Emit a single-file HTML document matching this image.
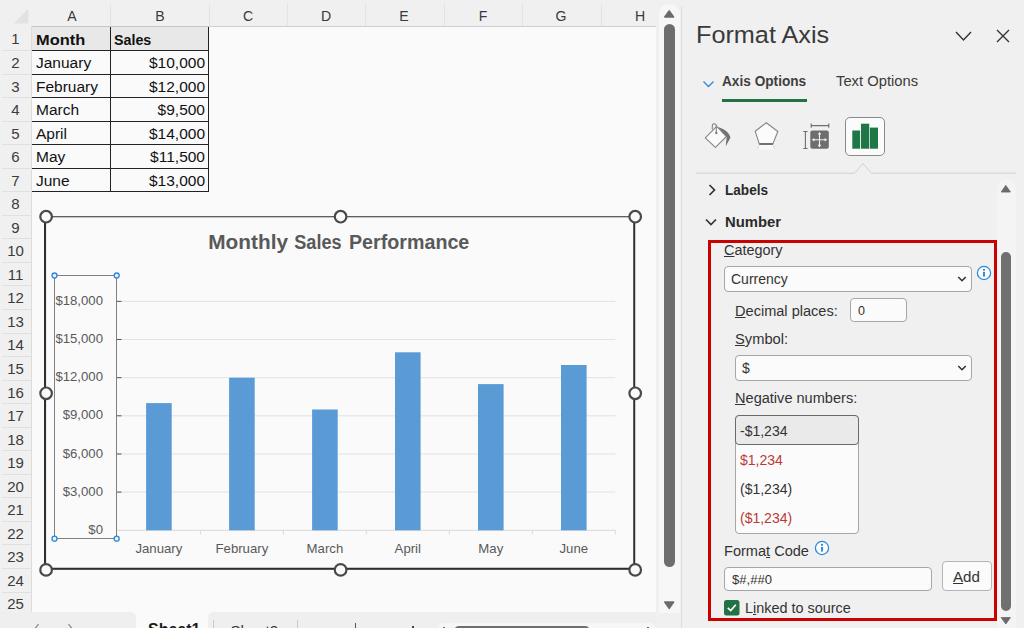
<!DOCTYPE html>
<html>
<head>
<meta charset="utf-8">
<title>Format Axis</title>
<style>
*{box-sizing:border-box;margin:0;padding:0}
html,body{width:1024px;height:628px;overflow:hidden;background:#f9f9f9}
body{font-family:"Liberation Sans",sans-serif;position:relative;color:#222}
.abs{position:absolute}
.t{position:absolute;white-space:nowrap;line-height:1;transform-origin:0 50%}
.c{transform-origin:50% 50%}
.r{transform-origin:100% 50%}
/* sheet */
#sheet{position:absolute;left:0;top:0;width:656px;height:613px;background:#fafafa;overflow:hidden}
#colhdr{position:absolute;left:0;top:0;width:656px;height:27px;background:#f0f0f0;border-bottom:1px solid #cfcfcf}
#rowhdr{position:absolute;left:0;top:26px;width:32px;height:587px;background:#f0f0f0;border-right:1px solid #dcdcdc}
.ch{position:absolute;top:6.4px;font-size:15px;color:#3b3b3b;width:40px;margin-left:-20px;text-align:center;line-height:20px;transform:scaleX(0.94)}
.csep{position:absolute;top:4px;width:1px;height:22px;background:#e3e3e3}
.rh{position:absolute;left:0;width:31px;text-align:center;font-size:15px;color:#3b3b3b;line-height:20px}
.rsep{position:absolute;left:2px;width:30px;height:1px;background:#e0e0e0}
.cell{position:absolute;font-size:15.5px;color:#111;line-height:22px;white-space:nowrap}
/* panel */
#panel{position:absolute;left:682px;top:0;width:342px;height:628px;background:#f0f0f0}
.box{position:absolute;background:#fbfbfb;border:1px solid #a6a6a6;border-radius:4px}
</style>
</head>
<body>
<div id="sheet">
  <div id="colhdr"></div>
  <div id="rowhdr"></div>
  <!--HDR-->
  <svg class="abs" style="left:12px;top:8px" width="18" height="18" viewBox="0 0 18 18"><path d="M16.3 0.8 V15.6 H1.5 Z" fill="#e2e2e2"/></svg>
  <div class="ch" style="left:72px">A</div>
  <div class="ch" style="left:160px">B</div>
  <div class="ch" style="left:248px">C</div>
  <div class="ch" style="left:326px">D</div>
  <div class="ch" style="left:404px">E</div>
  <div class="ch" style="left:483px">F</div>
  <div class="ch" style="left:561px">G</div>
  <div class="ch" style="left:640px">H</div>
  <div class="csep" style="left:110px"></div>
  <div class="csep" style="left:209px"></div>
  <div class="csep" style="left:287px"></div>
  <div class="csep" style="left:365px"></div>
  <div class="csep" style="left:444px"></div>
  <div class="csep" style="left:522px"></div>
  <div class="csep" style="left:601px"></div>
  <div class="rh" style="top:29.4px">1</div>
  <div class="rsep" style="top:50.0px"></div>
  <div class="rh" style="top:52.9px">2</div>
  <div class="rsep" style="top:73.6px"></div>
  <div class="rh" style="top:76.5px">3</div>
  <div class="rsep" style="top:97.1px"></div>
  <div class="rh" style="top:100.0px">4</div>
  <div class="rsep" style="top:120.7px"></div>
  <div class="rh" style="top:123.6px">5</div>
  <div class="rsep" style="top:144.2px"></div>
  <div class="rh" style="top:147.1px">6</div>
  <div class="rsep" style="top:167.7px"></div>
  <div class="rh" style="top:170.6px">7</div>
  <div class="rsep" style="top:191.3px"></div>
  <div class="rh" style="top:194.2px">8</div>
  <div class="rsep" style="top:214.8px"></div>
  <div class="rh" style="top:217.7px">9</div>
  <div class="rsep" style="top:238.4px"></div>
  <div class="rh" style="top:241.3px">10</div>
  <div class="rsep" style="top:261.9px"></div>
  <div class="rh" style="top:264.8px">11</div>
  <div class="rsep" style="top:285.4px"></div>
  <div class="rh" style="top:288.3px">12</div>
  <div class="rsep" style="top:309.0px"></div>
  <div class="rh" style="top:311.9px">13</div>
  <div class="rsep" style="top:332.5px"></div>
  <div class="rh" style="top:335.4px">14</div>
  <div class="rsep" style="top:356.1px"></div>
  <div class="rh" style="top:359.0px">15</div>
  <div class="rsep" style="top:379.6px"></div>
  <div class="rh" style="top:382.5px">16</div>
  <div class="rsep" style="top:403.1px"></div>
  <div class="rh" style="top:406.0px">17</div>
  <div class="rsep" style="top:426.7px"></div>
  <div class="rh" style="top:429.6px">18</div>
  <div class="rsep" style="top:450.2px"></div>
  <div class="rh" style="top:453.1px">19</div>
  <div class="rsep" style="top:473.8px"></div>
  <div class="rh" style="top:476.7px">20</div>
  <div class="rsep" style="top:497.3px"></div>
  <div class="rh" style="top:500.2px">21</div>
  <div class="rsep" style="top:520.8px"></div>
  <div class="rh" style="top:523.7px">22</div>
  <div class="rsep" style="top:544.4px"></div>
  <div class="rh" style="top:547.3px">23</div>
  <div class="rsep" style="top:567.9px"></div>
  <div class="rh" style="top:570.8px">24</div>
  <div class="rsep" style="top:591.5px"></div>
  <div class="rh" style="top:594.4px">25</div>
  <div class="rsep" style="top:615.0px"></div>
  <!--TABLE-->
  <div class="abs" style="left:32px;top:26px;width:177px;height:2px;background:#c6c6c6"></div>
  <div class="abs" style="left:32px;top:27px;width:177px;height:24px;background:#e8e8e8"></div>
  <div class="cell" style="left:35.5px;top:28.5px;font-weight:bold;transform:scaleX(1.06);transform-origin:0 50%">Month</div>
  <div class="cell" style="left:114px;top:28.5px;font-weight:bold;transform:scaleX(0.92);transform-origin:0 50%">Sales</div>
  <div class="cell" style="left:36px;top:52.0px;">January</div>
  <div class="cell" style="left:110px;width:95px;text-align:right;top:52.0px">$10,000</div>
  <div class="cell" style="left:36px;top:75.6px;">February</div>
  <div class="cell" style="left:110px;width:95px;text-align:right;top:75.6px">$12,000</div>
  <div class="cell" style="left:36px;top:99.1px;">March</div>
  <div class="cell" style="left:110px;width:95px;text-align:right;top:99.1px">$9,500</div>
  <div class="cell" style="left:36px;top:122.7px;">April</div>
  <div class="cell" style="left:110px;width:95px;text-align:right;top:122.7px">$14,000</div>
  <div class="cell" style="left:36px;top:146.2px;">May</div>
  <div class="cell" style="left:110px;width:95px;text-align:right;top:146.2px">$11,500</div>
  <div class="cell" style="left:36px;top:169.7px;">June</div>
  <div class="cell" style="left:110px;width:95px;text-align:right;top:169.7px">$13,000</div>
  <div class="abs" style="left:32px;top:50px;width:177px;height:1px;background:#222"></div>
  <div class="abs" style="left:32px;top:74px;width:177px;height:1px;background:#222"></div>
  <div class="abs" style="left:32px;top:97px;width:177px;height:1px;background:#222"></div>
  <div class="abs" style="left:32px;top:121px;width:177px;height:1px;background:#222"></div>
  <div class="abs" style="left:32px;top:144px;width:177px;height:1px;background:#222"></div>
  <div class="abs" style="left:32px;top:168px;width:177px;height:1px;background:#222"></div>
  <div class="abs" style="left:32px;top:191px;width:177px;height:1px;background:#222"></div>
  <div class="abs" style="left:110px;top:27px;width:1px;height:165px;background:#222"></div>
  <div class="abs" style="left:208px;top:27px;width:1px;height:165px;background:#222"></div>
  <!--CHART-->
  <svg class="abs" style="left:0;top:0" width="656" height="613" viewBox="0 0 656 613" font-family="Liberation Sans, sans-serif">
  <rect x="45.5" y="216.7" width="589" height="352" fill="#fafafa" stroke="#4f4f4f" stroke-width="1.2"/>
  <line x1="45" y1="216" x2="45" y2="569.8" stroke="#2e2e2e" stroke-width="2"/>
  <line x1="634.2" y1="216" x2="634.2" y2="569.8" stroke="#2e2e2e" stroke-width="1.9"/>
  <line x1="44" y1="568.8" x2="635.2" y2="568.8" stroke="#2e2e2e" stroke-width="2"/>
  <line x1="117.4" y1="492.1" x2="615.3" y2="492.1" stroke="#e2e2e2" stroke-width="1"/>
  <line x1="117" y1="492.1" x2="121.5" y2="492.1" stroke="#555" stroke-width="1"/>
  <line x1="117.4" y1="454.0" x2="615.3" y2="454.0" stroke="#e2e2e2" stroke-width="1"/>
  <line x1="117" y1="454.0" x2="121.5" y2="454.0" stroke="#555" stroke-width="1"/>
  <line x1="117.4" y1="415.8" x2="615.3" y2="415.8" stroke="#e2e2e2" stroke-width="1"/>
  <line x1="117" y1="415.8" x2="121.5" y2="415.8" stroke="#555" stroke-width="1"/>
  <line x1="117.4" y1="377.7" x2="615.3" y2="377.7" stroke="#e2e2e2" stroke-width="1"/>
  <line x1="117" y1="377.7" x2="121.5" y2="377.7" stroke="#555" stroke-width="1"/>
  <line x1="117.4" y1="339.5" x2="615.3" y2="339.5" stroke="#e2e2e2" stroke-width="1"/>
  <line x1="117" y1="339.5" x2="121.5" y2="339.5" stroke="#555" stroke-width="1"/>
  <line x1="117.4" y1="301.4" x2="615.3" y2="301.4" stroke="#e2e2e2" stroke-width="1"/>
  <line x1="117" y1="301.4" x2="121.5" y2="301.4" stroke="#555" stroke-width="1"/>
  <line x1="117.4" y1="530.3" x2="615.3" y2="530.3" stroke="#d9d9d9" stroke-width="1"/>
  <line x1="200.4" y1="530.3" x2="200.4" y2="534.5" stroke="#d9d9d9" stroke-width="1"/>
  <line x1="283.4" y1="530.3" x2="283.4" y2="534.5" stroke="#d9d9d9" stroke-width="1"/>
  <line x1="366.3" y1="530.3" x2="366.3" y2="534.5" stroke="#d9d9d9" stroke-width="1"/>
  <line x1="449.3" y1="530.3" x2="449.3" y2="534.5" stroke="#d9d9d9" stroke-width="1"/>
  <line x1="532.3" y1="530.3" x2="532.3" y2="534.5" stroke="#d9d9d9" stroke-width="1"/>
  <line x1="615.3" y1="530.3" x2="615.3" y2="534.5" stroke="#d9d9d9" stroke-width="1"/>
  <rect x="146.1" y="403.1" width="25.6" height="127.2" fill="#5b9bd5"/>
  <rect x="229.1" y="377.7" width="25.6" height="152.6" fill="#5b9bd5"/>
  <rect x="312.1" y="409.5" width="25.6" height="120.8" fill="#5b9bd5"/>
  <rect x="395.0" y="352.3" width="25.6" height="178.0" fill="#5b9bd5"/>
  <rect x="478.0" y="384.1" width="25.6" height="146.2" fill="#5b9bd5"/>
  <rect x="561.0" y="365.0" width="25.6" height="165.3" fill="#5b9bd5"/>
  <text x="158.9" y="553" font-size="13.2" fill="#595959" text-anchor="middle">January</text>
  <text x="241.9" y="553" font-size="13.2" fill="#595959" text-anchor="middle">February</text>
  <text x="324.9" y="553" font-size="13.2" fill="#595959" text-anchor="middle">March</text>
  <text x="407.8" y="553" font-size="13.2" fill="#595959" text-anchor="middle">April</text>
  <text x="490.8" y="553" font-size="13.2" fill="#595959" text-anchor="middle">May</text>
  <text x="573.8" y="553" font-size="13.2" fill="#595959" text-anchor="middle">June</text>
  <text transform="translate(103 533.9) scale(1.055 1)" x="0" y="0" font-size="12.5" fill="#595959" text-anchor="end">$0</text>
  <text transform="translate(103 495.7) scale(1.055 1)" x="0" y="0" font-size="12.5" fill="#595959" text-anchor="end">$3,000</text>
  <text transform="translate(103 457.6) scale(1.055 1)" x="0" y="0" font-size="12.5" fill="#595959" text-anchor="end">$6,000</text>
  <text transform="translate(103 419.4) scale(1.055 1)" x="0" y="0" font-size="12.5" fill="#595959" text-anchor="end">$9,000</text>
  <text transform="translate(103 381.3) scale(1.055 1)" x="0" y="0" font-size="12.5" fill="#595959" text-anchor="end">$12,000</text>
  <text transform="translate(103 343.1) scale(1.055 1)" x="0" y="0" font-size="12.5" fill="#595959" text-anchor="end">$15,000</text>
  <text transform="translate(103 305.0) scale(1.055 1)" x="0" y="0" font-size="12.5" fill="#595959" text-anchor="end">$18,000</text>
  <text x="208.3" y="248.5" font-size="19.4" font-weight="bold" fill="#595959" textLength="79.7" lengthAdjust="spacingAndGlyphs">Monthly</text><text x="294.3" y="248.5" font-size="19.4" font-weight="bold" fill="#595959" textLength="47.3" lengthAdjust="spacingAndGlyphs">Sales</text><text x="349" y="248.5" font-size="19.4" font-weight="bold" fill="#595959" textLength="120.3" lengthAdjust="spacingAndGlyphs">Performance</text>
  <rect x="54.5" y="275.5" width="62" height="263" fill="none" stroke="#808080" stroke-width="1"/>
  <circle cx="54.5" cy="275.5" r="2.5" fill="#e8f1fa" stroke="#2e86d6" stroke-width="1.3"/>
  <circle cx="116.7" cy="275.5" r="2.5" fill="#e8f1fa" stroke="#2e86d6" stroke-width="1.3"/>
  <circle cx="54.5" cy="538.7" r="2.5" fill="#e8f1fa" stroke="#2e86d6" stroke-width="1.3"/>
  <circle cx="116.7" cy="538.7" r="2.5" fill="#e8f1fa" stroke="#2e86d6" stroke-width="1.3"/>
  <circle cx="46.1" cy="216.7" r="5.8" fill="#fafafa" stroke="#494949" stroke-width="2.2"/>
  <circle cx="340.6" cy="216.7" r="5.8" fill="#fafafa" stroke="#494949" stroke-width="2.2"/>
  <circle cx="635.2" cy="216.7" r="5.8" fill="#fafafa" stroke="#494949" stroke-width="2.2"/>
  <circle cx="46.1" cy="393.3" r="5.8" fill="#fafafa" stroke="#494949" stroke-width="2.2"/>
  <circle cx="635.2" cy="393.3" r="5.8" fill="#fafafa" stroke="#494949" stroke-width="2.2"/>
  <circle cx="46.1" cy="569.9" r="5.8" fill="#fafafa" stroke="#494949" stroke-width="2.2"/>
  <circle cx="340.6" cy="569.9" r="5.8" fill="#fafafa" stroke="#494949" stroke-width="2.2"/>
  <circle cx="635.2" cy="569.9" r="5.8" fill="#fafafa" stroke="#494949" stroke-width="2.2"/>
  </svg>
</div>
<div id="vscroll" class="abs" style="left:656px;top:0;width:26px;height:628px;background:#f0f0f0">
  <div class="abs" style="left:3px;top:4px;width:21px;height:608.7px;background:#f7f7f7;border-radius:10px 10px 0 0"></div>
  <svg class="abs" style="left:7px;top:9px" width="12" height="10" viewBox="0 0 12 10"><path d="M1.8 7.9 L6.2 1.9 L10.6 7.9 Z" fill="#6b6b6b" stroke="#6b6b6b" stroke-width="1.6" stroke-linejoin="round"/></svg>
  <div class="abs" style="left:8px;top:24px;width:10.5px;height:543px;background:#6e6e6e;border-radius:5.5px"></div>
  <svg class="abs" style="left:7px;top:599.5px" width="12" height="10" viewBox="0 0 12 10"><path d="M1.8 2.1 L6.2 8.4 L10.6 2.1 Z" fill="#6b6b6b" stroke="#6b6b6b" stroke-width="1.6" stroke-linejoin="round"/></svg>
  <div class="abs" style="left:25px;top:6px;width:1px;height:622px;background:#dedede"></div>
</div>
<div id="tabs" class="abs" style="left:0;top:612px;width:656px;height:16px;background:#fafafa;overflow:hidden">
  <div class="abs" style="left:0;top:0;width:136px;height:20px;background:#efefef;border-top-right-radius:5px"></div>
  <div class="abs" style="left:208px;top:0;width:448px;height:20px;background:#efefef;border-top-left-radius:5px"></div>
  <div class="t" style="left:147.5px;top:9px;font-size:17px;font-weight:bold;color:#1a1a1a;transform:scaleX(0.94)">Sheet1</div>
  <div class="t" style="left:230.5px;top:11.2px;font-size:15px;color:#333">Sheet2</div>
  <div class="abs" style="left:213px;top:8px;width:1px;height:10px;background:#c8c8c8"></div>
  <div class="abs" style="left:297px;top:8px;width:1px;height:10px;background:#c8c8c8"></div>
    <svg class="abs" style="left:28px;top:10px" width="52" height="8" viewBox="0 0 52 8"><path d="M10.5 2.2 L5 9 M40.5 2.2 L46 9" fill="none" stroke="#8c8c8c" stroke-width="1.3"/></svg>
  <div class="abs" style="left:355px;top:11px;width:1px;height:8px;background:#555"></div>
  <div class="abs" style="left:411.5px;top:14px;width:2px;height:3px;background:#444"></div>
  <div class="abs" style="left:438px;top:10.5px;width:218px;height:12px;background:#f6f6f6;border-radius:6px"></div>
  <div class="abs" style="left:453.6px;top:13.6px;width:136px;height:10px;background:#6e6e6e;border-radius:5px"></div>
  <div class="abs" style="left:442.5px;top:15px;width:2px;height:3px;background:#6b6b6b"></div>
  <div class="abs" style="left:646.5px;top:15px;width:2px;height:3px;background:#6b6b6b"></div>
</div>
<div id="panel"></div>
<!--PANEL-->
<div class="t" style="left:696px;top:23px;font-size:24.5px;color:#3a3a3a;transform:scaleX(1.03)">Format Axis</div>
<svg class="abs" style="left:950px;top:24px" width="70" height="24" viewBox="0 0 70 24"><path d="M6 8 L13.5 16 L21 8" fill="none" stroke="#333" stroke-width="1.4"/><path d="M47 6 L59 18 M59 6 L47 18" fill="none" stroke="#333" stroke-width="1.4"/></svg>
<svg class="abs" style="left:702px;top:78px" width="14" height="12" viewBox="0 0 14 12"><path d="M1.5 3.5 L6.5 8.5 L11.5 3.5" fill="none" stroke="#2b88d8" stroke-width="1.3"/></svg>
<div class="t" style="left:722px;top:74px;font-size:14px;font-weight:bold;color:#404040;transform:scaleX(0.975)">Axis Options</div>
<div class="abs" style="left:722px;top:99px;width:85px;height:3px;background:#217346"></div>
<div class="t" style="left:836px;top:74px;font-size:14px;color:#3a3a3a;transform:scaleX(1.055)">Text Options</div>
<svg class="abs" style="left:696px;top:110px" width="200" height="56" viewBox="0 0 200 56">
<!-- paint bucket -->
<path d="M20.7 16.3 L30.4 26.5 L19.4 37.4 L9.3 27.8 Z" fill="#fbfbfb" stroke="#858585" stroke-width="1.1" stroke-linejoin="round"/>
<path d="M16.3 19.6 V16 C16.3 12.9 20.3 12.9 20.3 16 V22.6" fill="none" stroke="#858585" stroke-width="1.1"/>
<circle cx="20.3" cy="23" r="1.15" fill="#7a7a7a"/>
<path d="M22 17.2 C28 18.5 33.5 22.5 34.4 27.6 C33.6 30.5 31 33 29.9 36.6 C29.8 32.5 30.6 29.5 30.6 26.5 Z" fill="#727272"/>
<!-- pentagon -->
<path d="M63.3 34.8 L76.9 34.8 L78.9 39.4 L61.4 39.4 Z" fill="#f9f9f9"/>
<path d="M63.1 35 L61.6 39.2 M77.1 35 L78.7 39.2" stroke="#d2d2d2" stroke-width="0.8" fill="none"/>
<path d="M70.3 12.8 L81.8 21.5 L76.9 33.9 L63.3 33.9 L59.2 21.3 Z" fill="#fbfbfb" stroke="#858585" stroke-width="1.1" stroke-linejoin="round"/>
<path d="M63.3 34 L76.9 34" stroke="#6e6e6e" stroke-width="1.9"/>
<!-- size icon -->
<path d="M109.4 21.5 V38.5 M107.2 21.5 H111.6 M107.2 38.5 H111.6" stroke="#6e6e6e" stroke-width="1.1" fill="none"/>
<path d="M115.2 15.6 H132.8 M115.2 13.4 V17.8 M132.8 13.4 V17.8" stroke="#6e6e6e" stroke-width="1.1" fill="none"/>
<rect x="114.3" y="20.5" width="18.5" height="18.2" rx="2" fill="#6e6e6e"/>
<path d="M123.5 23 V36.4 M116.8 29.7 H130.2" stroke="#f2f2f2" stroke-width="1.1"/>
<path d="M123.5 22 L125.3 24.6 H121.7 Z M123.5 37.4 L125.3 34.8 H121.7 Z M115.8 29.7 L118.4 27.9 V31.5 Z M131.2 29.7 L128.6 27.9 V31.5 Z" fill="#f2f2f2"/>
<!-- bar chart selected -->
<rect x="149.5" y="7.5" width="39" height="38" rx="4.5" fill="#fbfbfb" stroke="#8a8a8a" stroke-width="1"/>
<rect x="156.3" y="20.5" width="7.8" height="18.2" fill="#1f7647"/>
<rect x="165" y="13.7" width="8.2" height="25" fill="#1f7647"/>
<rect x="173.9" y="17.6" width="8.1" height="21.1" fill="#1f7647"/>
</svg>
<svg class="abs" style="left:696px;top:163px" width="322" height="12" viewBox="0 0 322 12"><path d="M0 10.2 H158.5 L167 0.7 L175.5 10.2 H320" fill="none" stroke="#d0d0d0" stroke-width="1"/></svg>
<svg class="abs" style="left:706px;top:183px" width="12" height="14" viewBox="0 0 12 14"><path d="M3.5 2 L8.5 7 L3.5 12" fill="none" stroke="#333" stroke-width="1.7"/></svg>
<div class="t" style="left:725px;top:183px;font-size:14px;font-weight:bold;color:#2a2a2a;transform:scaleX(0.97)">Labels</div>
<svg class="abs" style="left:704px;top:216px" width="14" height="12" viewBox="0 0 14 12"><path d="M2 3.5 L7 8.5 L12 3.5" fill="none" stroke="#333" stroke-width="1.7"/></svg>
<div class="t" style="left:725px;top:215px;font-size:14px;font-weight:bold;color:#2a2a2a;transform:scaleX(1.06)">Number</div>
<div class="abs" style="left:708px;top:240px;width:289px;height:381px;border:3px solid #cb0000"></div>
<div class="t" style="left:724px;top:243px;font-size:14px;color:#333;transform:scaleX(1.03)"><u>C</u>ategory</div>
<div class="box" style="left:724px;top:266px;width:248px;height:26px"></div>
<div class="t" style="left:731px;top:272px;font-size:14px;color:#333">Currency</div>
<svg class="abs" style="left:957px;top:275px" width="10" height="8" viewBox="0 0 10 8"><path d="M1.3 2 L5 5.7 L8.7 2" fill="none" stroke="#333" stroke-width="1.6"/></svg>
<svg class="abs" style="left:976.2px;top:265.2px" width="16" height="16" viewBox="0 0 16 16"><circle cx="8" cy="8" r="6.6" fill="#fdfdfd" stroke="#2b88d8" stroke-width="1.25"/><rect x="7.05" y="6.9" width="1.9" height="4.7" fill="#2b88d8"/><circle cx="8" cy="4.8" r="1.15" fill="#2b88d8"/></svg>
<div class="t" style="left:735px;top:304px;font-size:14px;color:#333;transform:scaleX(1.04)"><u>D</u>ecimal places:</div>
<div class="box" style="left:850px;top:298px;width:57px;height:24px"></div>
<div class="t" style="left:858px;top:305px;font-size:12.5px;color:#333">0</div>
<div class="t" style="left:735px;top:332px;font-size:14px;color:#333;transform:scaleX(1.05)"><u>S</u>ymbol:</div>
<div class="box" style="left:735px;top:355px;width:237px;height:26px"></div>
<div class="t" style="left:742px;top:361px;font-size:14px;color:#333">$</div>
<svg class="abs" style="left:957px;top:364px" width="10" height="8" viewBox="0 0 10 8"><path d="M1.3 2 L5 5.7 L8.7 2" fill="none" stroke="#333" stroke-width="1.6"/></svg>
<div class="t" style="left:735px;top:391px;font-size:14px;color:#333;transform:scaleX(1.04)"><u>N</u>egative numbers:</div>
<div class="box" style="left:735px;top:415px;width:124px;height:119px"></div>
<div class="box" style="left:735px;top:415px;width:124px;height:30px;background:#eaeaea;border-color:#6a6a6a"></div>
<div class="t" style="left:740px;top:424px;font-size:14px;color:#333">-$1,234</div>
<div class="t" style="left:740px;top:453px;font-size:14px;color:#bb3a36">$1,234</div>
<div class="t" style="left:740px;top:482px;font-size:14px;color:#333">($1,234)</div>
<div class="t" style="left:740px;top:511px;font-size:14px;color:#bb3a36">($1,234)</div>
<div class="t" style="left:723.5px;top:544px;font-size:14px;color:#333;transform:scaleX(1.04)">Forma<u>t</u> Code</div>
<svg class="abs" style="left:814.2px;top:539.6px" width="16" height="16" viewBox="0 0 16 16"><circle cx="8" cy="8" r="6.6" fill="#fdfdfd" stroke="#2b88d8" stroke-width="1.25"/><rect x="7.05" y="6.9" width="1.9" height="4.7" fill="#2b88d8"/><circle cx="8" cy="4.8" r="1.15" fill="#2b88d8"/></svg>
<div class="box" style="left:724px;top:567px;width:208px;height:24px"></div>
<div class="t" style="left:732px;top:574px;font-size:12.5px;color:#333;transform:scaleX(1.045)">$#,##0</div>
<div class="box" style="left:942px;top:561px;width:50px;height:30px;border-color:#b5b5b5"></div>
<div class="t" style="left:953px;top:570px;font-size:14px;color:#333;transform:scaleX(1.08)"><u>A</u>dd</div>
<svg class="abs" style="left:724px;top:600px" width="16" height="16" viewBox="0 0 16 16"><rect x="0" y="0" width="15.5" height="15.5" rx="2.5" fill="#217346"/><path d="M3.8 7.9 L6.7 10.6 L11.8 4.8" fill="none" stroke="#fff" stroke-width="1.7"/></svg>
<div class="t" style="left:745px;top:601px;font-size:14px;color:#333;transform:scaleX(1.03)">L<u>i</u>nked to source</div>
<div class="abs" style="left:996.5px;top:179px;width:19.5px;height:460px;background:#f4f4f4;border-radius:9px"></div>
<svg class="abs" style="left:1000px;top:183px" width="12" height="12" viewBox="0 0 12 12"><path d="M1.2 9 L5.8 2.4 L10.4 9 Z" fill="#6b6b6b" stroke="#6b6b6b" stroke-width="0.9" stroke-linejoin="round"/></svg>
<div class="abs" style="left:1000.5px;top:252px;width:10.5px;height:358.5px;background:#707070;border-radius:5.5px"></div>
<svg class="abs" style="left:1000px;top:615px" width="12" height="12" viewBox="0 0 12 12"><path d="M1.2 2.6 L5.8 9 L10.4 2.6 Z" fill="#6b6b6b" stroke="#6b6b6b" stroke-width="0.9" stroke-linejoin="round"/></svg>
<!--/PANEL-->
</body>
</html>
